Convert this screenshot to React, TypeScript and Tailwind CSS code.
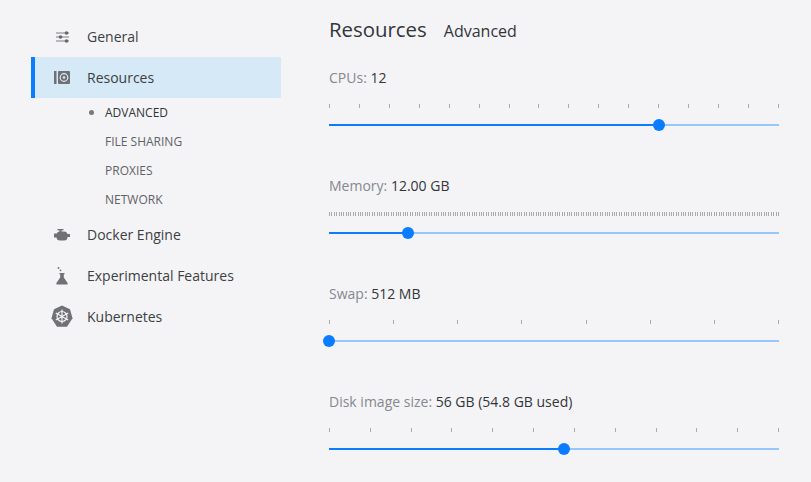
import React from 'react';

const font = "font-['Open_Sans',sans-serif]";

function GeneralIcon() {
  return (
    <svg width="13" height="12" viewBox="0 0 13 12" fill="none" stroke="#7d7f83" strokeWidth="1.100">
      <path d="M0 2h13M0 6h13M0 10h13" />
      <circle cx="10.500" cy="2" r="1.800" fill="#66686c" stroke="none" />
      <circle cx="4.500" cy="6" r="1.800" fill="#66686c" stroke="none" />
      <circle cx="10.500" cy="10" r="1.800" fill="#66686c" stroke="none" />
    </svg>
  );
}

function ResourcesIcon() {
  return (
    <svg width="16" height="13" viewBox="0 0 16 13">
      <rect x="0" y="0" width="2.500" height="13" fill="#6f7175" />
      <rect x="4" y="0" width="12" height="13" rx="1" fill="#6f7175" />
      <circle cx="10" cy="6.500" r="3.800" fill="none" stroke="#d6e9f6" strokeWidth="1.200" />
      <circle cx="10" cy="6.500" r="1.300" fill="#d6e9f6" />
    </svg>
  );
}

function EngineIcon() {
  return (
    <svg width="16" height="12" viewBox="0 0 16 12" fill="#6f7175">
      <rect x="3.500" y="0" width="6" height="1.300" />
      <rect x="5.500" y="1" width="2" height="2" />
      <rect x="2.500" y="2.500" width="11" height="9" rx="3.500" />
      <rect x="0" y="4.500" width="3" height="4" rx=".5" />
      <rect x="13" y="5" width="3" height="3" />
    </svg>
  );
}

function FlaskIcon() {
  return (
    <svg width="12" height="18" viewBox="0 0 12 18" fill="#6f7175">
      <path d="M3.500 6h5v1.200h-.7v3.300l3.800 5.500c.4.800 0 1.500-1 1.500H1.400c-1 0-1.400-.7-1-1.500l3.800-5.500V7.200h-.7z" />
      <circle cx="2.500" cy="1" r=".9" />
      <circle cx="4.500" cy="3.300" r=".9" />
    </svg>
  );
}

function KubeIcon() {
  return (
    <svg width="22" height="23" viewBox="0 0 22 23">
      <path d="M11 .5l8 3.800 2.500 9-5.500 8.500H6L.5 13.300l2.500-9z" fill="#6f7175" />
      <g stroke="#f4f4f6" fill="none" strokeWidth="1.200">
        <circle cx="11" cy="11.500" r="5" />
        <path d="M11 4.500v14M4.800 8l12.400 7M17.200 8l-12.400 7" />
      </g>
    </svg>
  );
}

const sideItems = ['ADVANCED', 'FILE SHARING', 'PROXIES', 'NETWORK'];

function NavRow({ icon, label, active }: { icon: React.ReactNode; label: string; active?: boolean }) {
  return (
    <div className={`flex h-[41px] items-center ${active ? 'border-l-4 border-[#0a7cff] bg-[#d6e9f6]' : 'border-l-4 border-transparent'}`}>
      <div className="flex w-[52px] justify-center pl-[2px]">{icon}</div>
      <span className="text-[14px] text-[#3c3f43]">{label}</span>
    </div>
  );
}

function Slider({ label, value, ticks, percent, top }: { label: string; value: string; ticks: number; percent: number; top: string }) {
  return (
    <div className={top}>
      <div className="text-[14px] leading-[18px] text-[#85888d]">
        {label}: <span className="text-[#333539]">{value}</span>
      </div>
      <div className="mt-[17px] flex h-[4px] justify-between">
        {Array.from({ length: ticks }).map((_, i) => (
          <div key={i} className="h-full w-px bg-[#a9aaac]" />
        ))}
      </div>
      <div className="relative mt-[16px] h-[2px] bg-[#97c6fb]">
        <div className="h-full bg-[#0a7cff]" style={{ width: `${percent}%` }} />
        <div
          className="absolute top-[-5px] ml-[-6px] h-[12px] w-[12px] rounded-full bg-[#0a7cff]"
          style={{ left: `${percent}%` }}
        />
      </div>
    </div>
  );
}

export default function App() {
  return (
    <div className={`flex h-[482px] w-[811px] overflow-hidden bg-[#f4f4f6] ${font}`}>
      <aside className="ml-[31px] w-[250px] pt-[16px]">
        <NavRow icon={<GeneralIcon />} label="General" />
        <NavRow icon={<ResourcesIcon />} label="Resources" active />
        <ul>
          {sideItems.map((item, i) => (
            <li key={item} className="flex h-[29px] items-center pl-[58px]">
              <span className={`mr-[11px] h-[5px] w-[5px] rounded-full ${i === 0 ? 'bg-[#77797d]' : ''}`} />
              <span className={`text-[12px] ${i === 0 ? 'text-[#333539]' : 'text-[#5f6266]'}`}>{item}</span>
            </li>
          ))}
        </ul>
        <NavRow icon={<EngineIcon />} label="Docker Engine" />
        <NavRow icon={<FlaskIcon />} label="Experimental Features" />
        <NavRow icon={<KubeIcon />} label="Kubernetes" />
      </aside>
      <main className="ml-[48px] w-[450px] pt-[15px]">
        <div className="flex items-baseline gap-[17px]">
          <h1 className="text-[20.4px] leading-[28px] text-[#333539]">Resources</h1>
          <span className="text-[16px] text-[#333539]">Advanced</span>
        </div>
        <Slider top="mt-[26px]" label="CPUs" value="12" ticks={16} percent={73.33} />
        <Slider top="mt-[51px]" label="Memory" value="12.00 GB" ticks={190} percent={17.5} />
        <Slider top="mt-[51px]" label="Swap" value="512 MB" ticks={8} percent={0} />
        <Slider top="mt-[51px]" label="Disk image size" value="56 GB (54.8 GB used)" ticks={12} percent={52.2} />
      </main>
    </div>
  );
}
